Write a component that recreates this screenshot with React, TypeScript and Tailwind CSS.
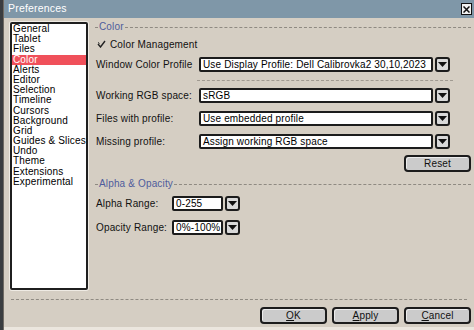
import React from "react";

const SECTIONS = [
  "General",
  "Tablet",
  "Files",
  "Color",
  "Alerts",
  "Editor",
  "Selection",
  "Timeline",
  "Cursors",
  "Background",
  "Grid",
  "Guides & Slices",
  "Undo",
  "Theme",
  "Extensions",
  "Experimental",
];

const font = { fontFamily: '"Liberation Sans", Arial, sans-serif' };

function Legend({ title }: { title: string }) {
  return (
    <div className="flex items-center h-[10px]">
      <div className="w-[3px] border-t border-dashed border-[#8f8a82]" />
      <span className="px-[1px] text-[#4f5c9c] leading-[10px]">{title}</span>
      <div className="flex-1 border-t border-dashed border-[#8f8a82]" />
    </div>
  );
}

function Arrow() {
  return (
    <div className="w-[15px] h-[15px] shrink-0 ml-[2px] bg-[#d9d9d9] border-2 border-[#1c1c1c] rounded-[3px] flex items-center justify-center">
      <svg width="9" height="5" viewBox="0 0 9 5">
        <path d="M0 0h9L4.5 5z" fill="#111" />
      </svg>
    </div>
  );
}

function Select({ value, width }: { value: string; width: string }) {
  return (
    <div className="flex items-center">
      <div
        className={`${width} h-[15px] bg-white border-2 border-[#1c1c1c] rounded-[2px] pl-[2px] flex items-center leading-[11px] text-black overflow-hidden whitespace-nowrap`}
      >
        {value}
      </div>
      <Arrow />
    </div>
  );
}

function Row({ label, children, labelW }: { label: string; children: React.ReactNode; labelW: string }) {
  return (
    <div className="flex items-center">
      <div className={`${labelW} shrink-0 pl-[1px] text-[#111]`}>{label}</div>
      {children}
    </div>
  );
}

function Btn({ first, rest }: { first: string; rest: string }) {
  return (
    <div className="w-[67px] h-[17px] bg-[#cbcbcb] border-2 border-[#1c1c1c] rounded-[4px] flex items-center justify-center text-[#111] shadow-[inset_1px_1px_0_#ececec]">
      <span className="underline underline-offset-[1px]">{first}</span>
      {rest}
    </div>
  );
}

export default function App() {
  return (
    <div
      className="w-[474px] h-[330px] bg-[#2f3133] flex text-[10px] tracking-[0.15px] overflow-hidden"
      style={font}
    >
      <div className="w-[3px] bg-[#3a3d40]" />
      <div className="flex-1 flex flex-col bg-[#d5cec3] border-l border-[#6f6a63]">
        {/* Title bar */}
        <div className="h-[18px] bg-[#7f97a8] flex items-center justify-between pl-[4px] pr-[2px]">
          <span className="text-white text-[10.5px] tracking-[0.2px]">Preferences</span>
          <div className="w-[11px] h-[12px] bg-[#f2f2f2] border border-[#111] flex items-center justify-center">
            <svg width="7" height="7" viewBox="0 0 7 7">
              <path d="M0.5 0.5L6.5 6.5M6.5 0.5L0.5 6.5" stroke="#111" strokeWidth="1.5" />
            </svg>
          </div>
        </div>

        {/* Body */}
        <div className="h-[277px] flex pt-[4px] pl-[6px]">
          <div className="w-[78px] h-[268px] bg-white border-2 border-[#1f1f1f] rounded-[2px] shadow-[0_0_0_1px_#efebe4]">
            {SECTIONS.map((s) => (
              <div
                key={s}
                className={`h-[10.2px] leading-[10.2px] pl-[1px] whitespace-nowrap ${
                  s === "Color" ? "bg-[#f0505a] text-white" : "text-black"
                }`}
              >
                {s}
              </div>
            ))}
          </div>

          <div className="flex-1 pl-[7px] pr-[3px] flex flex-col">
            <Legend title="Color" />

            <div className="mt-[7px] h-[10px] flex items-center gap-[4px] pl-[2px] text-[#111]">
              <svg width="9" height="8" viewBox="0 0 9 8">
                <path d="M1 4l2.5 3L8 1" stroke="#222" strokeWidth="1.4" fill="none" />
                <path d="M1 2.5l1.5 1" stroke="#222" strokeWidth="1" />
              </svg>
              <span>Color Management</span>
            </div>

            <div className="mt-[8px]">
              <Row label="Window Color Profile" labelW="w-[104px]">
                <Select value="Use Display Profile: Dell Calibrovka2 30,10,2023" width="w-[234px]" />
              </Row>
            </div>

            <div className="mt-[8px] ml-[102px] mr-[18px] border-t border-dashed border-[#a09a91]" />

            <div className="mt-[7px] flex flex-col gap-[8px]">
              <Row label="Working RGB space:" labelW="w-[104px]">
                <Select value="sRGB" width="w-[234px]" />
              </Row>
              <Row label="Files with profile:" labelW="w-[104px]">
                <Select value="Use embedded profile" width="w-[234px]" />
              </Row>
              <Row label="Missing profile:" labelW="w-[104px]">
                <Select value="Assign working RGB space" width="w-[234px]" />
              </Row>
            </div>

            <div className="mt-[6px] flex justify-end">
              <Btn first="" rest="Reset" />
            </div>

            <div className="mt-[7px]">
              <Legend title="Alpha & Opacity" />
            </div>

            <div className="mt-[7px] flex flex-col gap-[9px]">
              <Row label="Alpha Range:" labelW="w-[77px]">
                <Select value="0-255" width="w-[51px]" />
              </Row>
              <Row label="Opacity Range:" labelW="w-[77px]">
                <Select value="0%-100%" width="w-[51px]" />
              </Row>
            </div>
          </div>
        </div>

        {/* Footer */}
        <div className="mx-[7px] mt-[4px] border-t border-dashed border-[#8f8a82]" />
        <div className="flex justify-end gap-[5px] pr-[3px] mt-[7px]">
          <Btn first="O" rest="K" />
          <Btn first="A" rest="pply" />
          <Btn first="C" rest="ancel" />
        </div>
        <div className="mt-auto h-[3px] bg-[#ebe6de]" />
      </div>
    </div>
  );
}
